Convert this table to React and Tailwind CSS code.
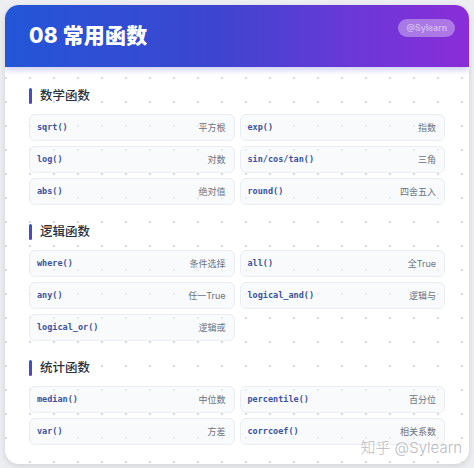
import React from "react";

const sections = [
  {
    title: "数学函数",
    items: [
      ["sqrt()", "平方根"],
      ["exp()", "指数"],
      ["log()", "对数"],
      ["sin/cos/tan()", "三角"],
      ["abs()", "绝对值"],
      ["round()", "四舍五入"],
    ],
  },
  {
    title: "逻辑函数",
    items: [
      ["where()", "条件选择"],
      ["all()", "全True"],
      ["any()", "任一True"],
      ["logical_and()", "逻辑与"],
      ["logical_or()", "逻辑或"],
    ],
  },
  {
    title: "统计函数",
    items: [
      ["median()", "中位数"],
      ["percentile()", "百分位"],
      ["var()", "方差"],
      ["corrcoef()", "相关系数"],
    ],
  },
];

const cjk = "font-['Inter','Noto_Sans_CJK_SC',sans-serif]";

export default function App() {
  return (
    <div className="w-[474px] h-[468px] bg-[#eceef2] p-[5px] relative overflow-hidden">
      <div className="rounded-[14px] bg-white shadow-[0_2px_6px_rgba(0,0,0,0.12)] overflow-hidden">
        <div className="h-[62px] bg-[linear-gradient(90deg,#2356d8_0%,#3d45cf_45%,#6a38d6_75%,#8a2dd9_100%)] flex items-center justify-between pl-[24px] pr-[14px] shadow-[0_3px_6px_rgba(60,60,200,0.25)] relative z-10">
          <div className={`${cjk} text-white text-[21px] font-extrabold tracking-[0.2px]`}>
            08 常用函数
          </div>
          <div className="-mt-[16px] h-[18px] px-[8px] rounded-full bg-white/35 flex items-center text-[8.5px] font-bold text-white/45 font-['Inter',sans-serif]">
            @Sylearn
          </div>
        </div>
        <div className="bg-[radial-gradient(circle,#d6dae0_0.7px,transparent_0.9px)] bg-[size:24px_24px] bg-[position:13px_-1px] px-[24px] pt-[20px] pb-[19px] flex flex-col gap-[18px]">
          {sections.map((s) => (
            <div key={s.title} className="flex flex-col gap-[9px]">
              <div className="h-[18px] flex items-center gap-[8px]">
                <div className="w-[3px] h-[16px] rounded-full bg-[linear-gradient(180deg,#2c56d8,#5b3fd6)]" />
                <div className={`${cjk} text-[12.5px] font-medium text-[#2a2f3a]`}>{s.title}</div>
              </div>
              <div className="grid grid-cols-2 gap-[5px]">
                {s.items.map(([code, desc]) => (
                  <div
                    key={code}
                    className="h-[27px] rounded-[6px] border border-[#eaedf1] bg-[#f4f6f9]/60 flex items-center justify-between pl-[7px] pr-[8px]"
                  >
                    <span className="font-['DejaVu_Sans_Mono',monospace] font-bold text-[8.5px] text-[#3a52a0]">
                      {code}
                    </span>
                    <span className={`${cjk} text-[9px] text-[#6b7280]`}>{desc}</span>
                  </div>
                ))}
              </div>
            </div>
          ))}
        </div>
      </div>
      <div className={`absolute right-[12px] bottom-[9px] ${cjk} text-[15px] text-[#a4a8b0]/80 font-light`}>
        知乎 @Sylearn
      </div>
    </div>
  );
}
